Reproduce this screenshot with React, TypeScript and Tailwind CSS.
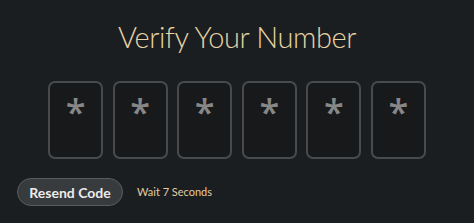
import React from "react";

export default function App() {
  const boxes = [0, 1, 2, 3, 4, 5];
  return (
    <div className="w-[474px] h-[223px] bg-[#1b1e20] flex flex-col overflow-hidden font-['Open_Sans',sans-serif]">
      <h1 className="pt-[19px] text-center text-[29px] leading-[36px] font-light tracking-[-0.4px] text-[#e6d3a6] font-['Lato',sans-serif]">
        Verify Your Number
      </h1>
      <div className="mt-[26px] flex justify-center gap-[9.6px]">
        {boxes.map((b) => (
          <div key={b} className="w-[55px] h-[78px] rounded-[7px] border-2 border-[#484b4d] bg-[#17191b] flex justify-center pt-[11px]">
            <span className="text-[36px] leading-[36px] font-semibold text-[#878787] font-['Open_Sans',sans-serif]">*</span>
          </div>
        ))}
      </div>
      <div className="mt-[19px] flex items-center pl-[17px]">
        <button className="w-[106px] h-[28px] rounded-full bg-[#383b3d] border border-[#5a5d5f] text-[#ececec] text-[14px] font-bold flex items-center justify-center font-['Lato',sans-serif]">
          Resend Code
        </button>
        <span className="ml-[14px] text-[11px] text-[#e2cda2] font-['Lato',sans-serif]">Wait 7 Seconds</span>
      </div>
    </div>
  );
}
